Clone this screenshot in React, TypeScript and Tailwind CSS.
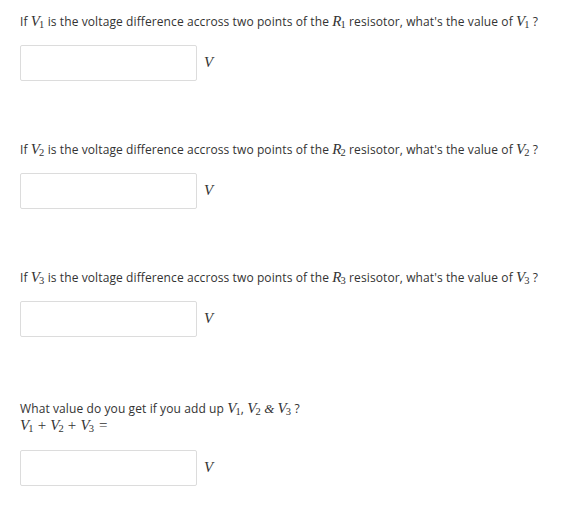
import React from 'react';

const Sym: React.FC<{ n?: number; l?: string }> = ({ n, l = 'V' }) => (
  <span className="font-['Liberation_Serif',serif] text-[15px] leading-none whitespace-nowrap">
    <i>{l}</i>
    {n !== undefined && <span className="text-[10.5px] relative top-[2px] ml-[-1px]">{n}</span>}
  </span>
);

const Answer: React.FC = () => (
  <div className="flex items-center">
    <div className="w-[177px] h-[36px] border border-[#dcdcdc] rounded-[2px] bg-white" />
    <span className="ml-[7px]">
      <Sym />
    </span>
  </div>
);

const Question: React.FC<{ n: number }> = ({ n }) => (
  <div className="mb-[60px]">
    <p className="leading-[17px]">
      If <Sym n={n} /> is the voltage difference accross two points of the <Sym l="R" n={n} /> resisotor,
      what's the value of <Sym n={n} /> ?
    </p>
    <div className="mt-[15px]">
      <Answer />
    </div>
  </div>
);

export default function App() {
  return (
    <div className="px-5 pt-[13px] font-['Open_Sans',sans-serif] text-[12px] tracking-[0.1px] text-[#333] bg-white min-h-[509px]">
      <Question n={1} />
      <Question n={2} />
      <Question n={3} />
      <div className="pt-[3px]">
        <p className="leading-[17px]">
          What value do you get if you add up <Sym n={1} />, <Sym n={2} /> <span className="font-['Liberation_Serif',serif] italic text-[13px]">&amp;</span> <Sym n={3} /> ?
        </p>
        <p className="leading-[17px] font-['Liberation_Serif',serif] text-[15px]">
          <Sym n={1} /><span className="mx-[4px]">+</span><Sym n={2} /><span className="mx-[4px]">+</span><Sym n={3} /><span className="ml-[5px]">=</span>
        </p>
        <div className="mt-[16px]">
          <Answer />
        </div>
      </div>
    </div>
  );
}
